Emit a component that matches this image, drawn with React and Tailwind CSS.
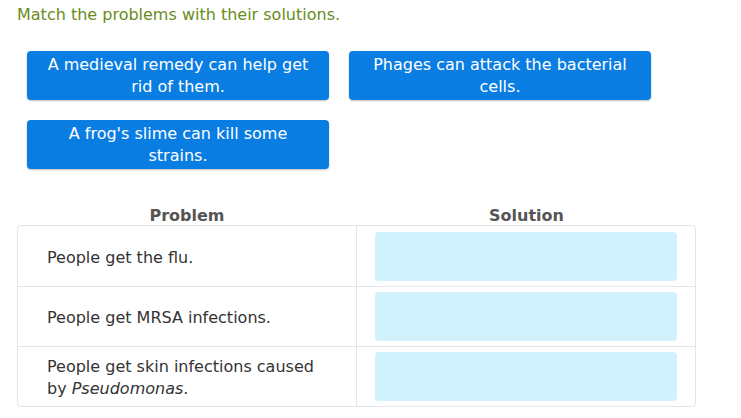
import React from 'react';

const font = { fontFamily: '"DejaVu Sans", Verdana, sans-serif' };

const choices = [
  'A medieval remedy can help get rid of them.',
  'Phages can attack the bacterial cells.',
  "A frog's slime can kill some strains.",
];

const problems = [
  <>People get the flu.</>,
  <>People get MRSA infections.</>,
  <>
    People get skin infections caused by <i>Pseudomonas</i>.
  </>,
];

export default function App() {
  return (
    <div className="w-[741px] h-[418px] bg-white overflow-hidden" style={font}>
      <div className="pl-[17px] pt-[4px] text-[16px] leading-[22px] text-[#6a8c1b]">
        Match the problems with their solutions.
      </div>

      {/* Draggable answers */}
      <div className="mt-[25px] ml-[27px] grid grid-cols-[302px_302px] gap-x-[20px] gap-y-[20px]">
        {choices.map((c) => (
          <div
            key={c}
            className="h-[49px] rounded-[4px] bg-[#0a7de3] shadow-[0_1px_2px_rgba(0,0,0,0.25)] text-white text-[16px] leading-[22px] text-center px-[18px] flex items-center justify-center"
          >
            <span>{c}</span>
          </div>
        ))}
      </div>

      {/* Table */}
      <div className="mt-[34px] ml-[17px] w-[679px]">
        <div className="grid grid-cols-[340px_339px] h-[22px] pt-[2px] text-[16px] font-bold text-[#555555] leading-[22px]">
          <div className="text-center">Problem</div>
          <div className="text-center">Solution</div>
        </div>
        <div className="border border-[#e4e4ec] rounded-[4px]">
          {problems.map((p, i) => (
            <div
              key={i}
              className={`grid grid-cols-[339px_1fr] h-[60px] ${i > 0 ? 'border-t border-[#e4e4ec]' : ''}`}
            >
              <div className="border-r border-[#e4e4ec] flex items-center pt-[3px] pl-[29px] pr-[30px] text-[16px] leading-[22px] text-[#333333]">
                <span>{p}</span>
              </div>
              <div className="flex items-center pl-[18px]">
                <div className="w-[302px] h-[49px] rounded-[4px] bg-[#d1f1fd]" />
              </div>
            </div>
          ))}
        </div>
      </div>
    </div>
  );
}
